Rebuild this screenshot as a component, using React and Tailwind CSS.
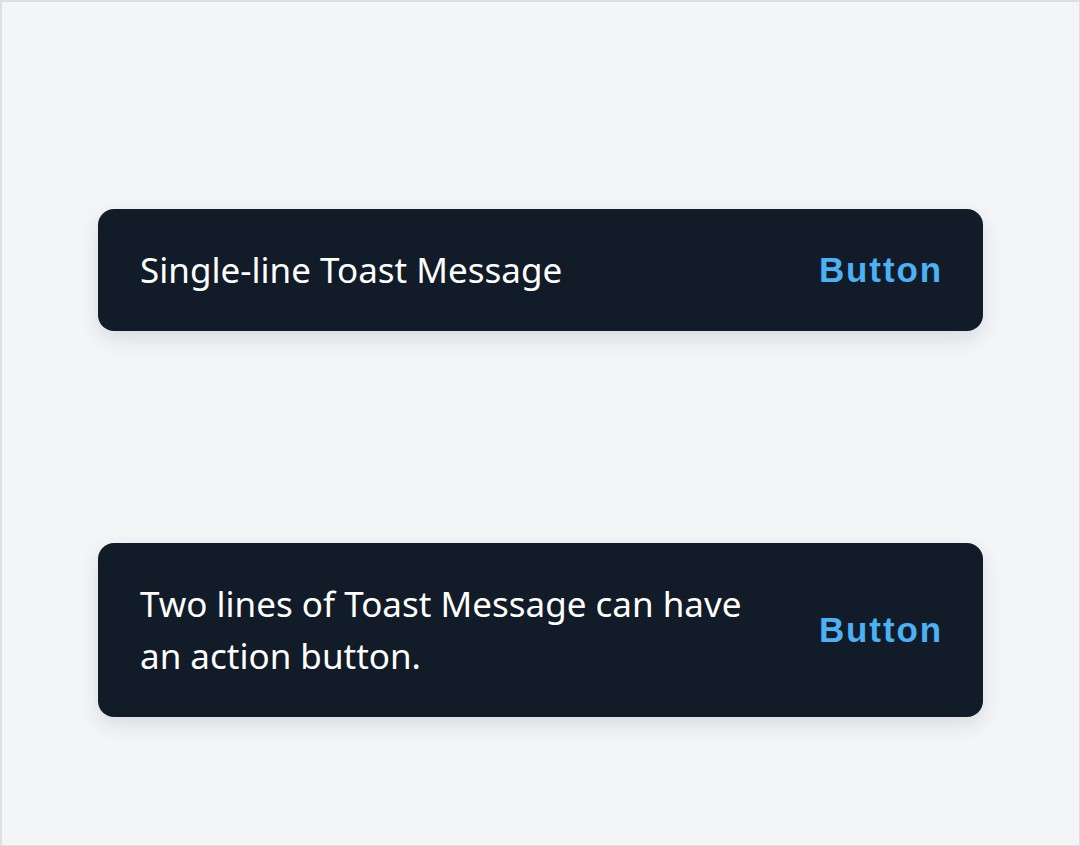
export default function App() {
  const toasts = [
    { id: 1, text: "Single-line Toast Message", action: "Button" },
    { id: 2, text: "Two lines of Toast Message can have an action button.", action: "Button" },
  ];

  return (
    <div
      className="h-[846px] w-[1080px] bg-[#f4f5f7] border-t-2 border-l-2 border-r border-b border-[#dcdfe5] flex flex-col pt-[207px] px-[96px] gap-[212px]"
      style={{ fontFamily: '"Noto Sans", sans-serif' }}
    >
      {toasts.map((toast) => (
        <div
          key={toast.id}
          className={
            toast.id === 1
              ? "bg-[#121c28] rounded-[16px] shadow-[0_8px_20px_rgba(20,40,70,0.12)] flex items-center justify-between h-[122px] pl-[42px] pr-[40px]"
              : "bg-[#121c28] rounded-[16px] shadow-[0_8px_20px_rgba(20,40,70,0.12)] flex items-center justify-between h-[174px] pl-[42px] pr-[40px]"
          }
        >
          <p className="text-white text-[35px] leading-[52px] max-w-[625px]">{toast.text}</p>
          <button className="text-[#4cb0f5] text-[35px] font-bold tracking-[1.9px] font-['Liberation_Sans',sans-serif]">
            {toast.action}
          </button>
        </div>
      ))}
    </div>
  );
}
